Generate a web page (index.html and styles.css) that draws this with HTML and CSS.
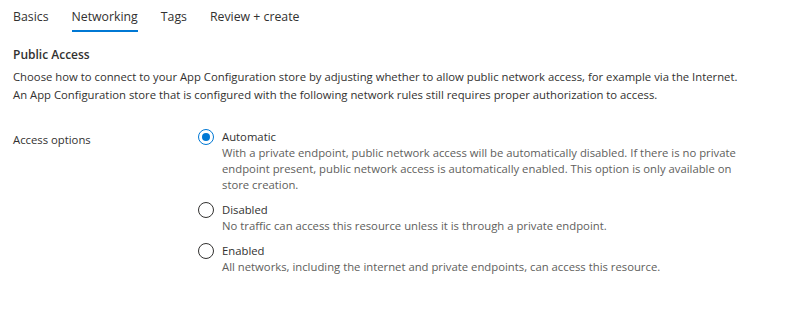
FILE: index.html
```html
<!DOCTYPE html>
<html>
<head>
<meta charset="utf-8">
<link rel="stylesheet" href="styles.css">
</head>
<body>
<nav class="tabs">
  <span class="tab">Basics</span>
  <span class="tab active">Networking</span>
  <span class="tab">Tags</span>
  <span class="tab">Review + create</span>
</nav>
<section class="section">
  <h2 class="title">Public Access</h2>
  <p class="desc">Choose how to connect to your App Configuration store by adjusting whether to allow public network access, for example via the Internet.<br>An App Configuration store that is configured with the following network rules still requires proper authorization to access.</p>
  <div class="field">
    <div class="label">Access options</div>
    <div class="options">
      <div class="option">
        <span class="radio checked"></span>
        <div class="otext">
          <div class="oname">Automatic</div>
          <div class="odesc">With a private endpoint, public network access will be automatically disabled. If there is no private endpoint present, public network access is automatically enabled. This option is only available on store creation.</div>
        </div>
      </div>
      <div class="option">
        <span class="radio"></span>
        <div class="otext">
          <div class="oname">Disabled</div>
          <div class="odesc">No traffic can access this resource unless it is through a private endpoint.</div>
        </div>
      </div>
      <div class="option">
        <span class="radio"></span>
        <div class="otext">
          <div class="oname">Enabled</div>
          <div class="odesc">All networks, including the internet and private endpoints, can access this resource.</div>
        </div>
      </div>
    </div>
  </div>
</section>
</body>
</html>
```
FILE: styles.css
```css
html, body { margin: 0; padding: 0; background: #fff; }
body {
  font-family: "Open Sans", "Noto Sans", sans-serif;
  font-size: 11.3px;
  color: #323130;
  width: 800px;
  height: 322px;
  overflow: hidden;
}
.tabs {
  display: flex;
  gap: 23px;
  padding: 8px 0 0 13px;
  height: 25px;
}
.tab {
  font-size: 12.3px;
  line-height: 18px;
  color: #323130;
  height: 24px;
  box-sizing: border-box;
}
.tab.active {
  border-bottom: 2px solid #0078d4;
}
.section { padding: 0 13px; }
.title {
  margin: 13px 0 0 0;
  font-size: 12px;
  font-weight: 600;
  line-height: 18px;
}
.desc {
  margin: 4px 0 0 0;
  line-height: 18px;
  color: #323130;
}
.field {
  display: flex;
  margin-top: 24px;
}
.label {
  width: 185px;
  line-height: 18px;
  padding-top: 3px;
}
.options {
  display: flex;
  flex-direction: column;
  gap: 8px;
}
.option {
  display: flex;
  gap: 8px;
}
.radio {
  width: 16px;
  height: 16px;
  border: 1px solid #323130;
  border-radius: 50%;
  box-sizing: border-box;
  flex: none;
  margin-top: 1px;
  position: relative;
}
.radio.checked { border-color: #0078d4; }
.radio.checked::after {
  content: "";
  position: absolute;
  left: 3px; top: 3px;
  width: 8px; height: 8px;
  border-radius: 50%;
  background: #0078d4;
}
.otext { width: 530px; }
.oname { line-height: 17px; color: #323130; }
.odesc { line-height: 16px; color: #605e5c; }
```
